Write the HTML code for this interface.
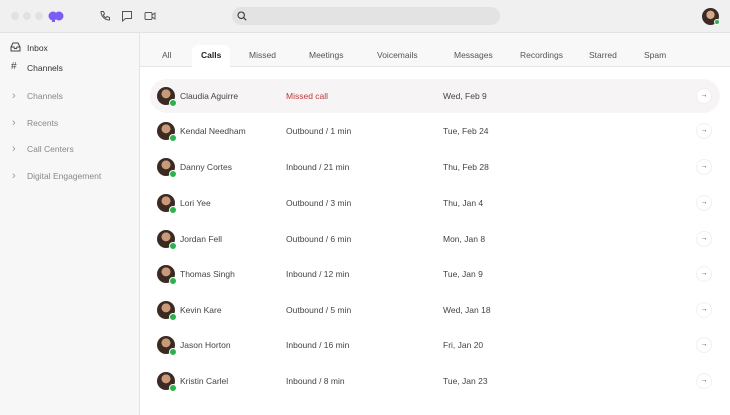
<!DOCTYPE html>
<html><head><style>
*{box-sizing:border-box;margin:0;padding:0}
body{width:730px;height:415px;overflow:hidden;background:#fff;font-family:"Liberation Sans",sans-serif;font-size:8.5px;color:#444;position:relative}
.top{position:absolute;left:0;top:0;width:730px;height:33px;background:#f0f0f0;border-bottom:1px solid #e2e2e2}
.dot{position:absolute;top:12px;width:8px;height:8px;border-radius:50%;background:#e2e2e2}
.side{position:absolute;left:0;top:33px;width:140px;height:382px;background:#f7f7f7;border-right:1px solid #e4e4e4}
.si{position:absolute;left:27px;font-size:8.5px}
.chev{position:absolute;left:12px;color:#999;font-size:11px;line-height:10px}
.tabs{position:absolute;left:140px;top:33px;width:590px;height:34px;background:#f8f8f8;border-bottom:1px solid #e6e6e6}
.tab{position:absolute;top:17px;font-size:8.5px;color:#555}
.calltab{position:absolute;left:192px;top:45px;width:38px;height:22px;background:#fff;border-radius:7px 7px 0 0}
.row{position:absolute;left:150px;width:570px;height:34px}
.row.hl{background:#f6f4f4;border-radius:17px}
.av{position:absolute;left:7px;top:8px;width:18px;height:18px;border-radius:50%;background:radial-gradient(circle at 50% 38%,#c99a7a 0 30%,#3a2a22 32%)}
.av:after{content:"";position:absolute;right:-2px;bottom:-2px;width:6px;height:6px;border-radius:50%;background:#2bb24c;border:1px solid #fff}
.nm{position:absolute;left:30px;top:12px}
.st{position:absolute;left:136px;top:12px}
.dt{position:absolute;left:293px;top:12px}
.ar{position:absolute;left:546px;top:9px;width:16px;height:16px;border-radius:50%;background:#fff;border:1px solid #f0f0f0;font-size:7px;text-align:center;line-height:14px;color:#333}
</style></head><body>
<div class="top">
<div class="dot" style="left:11px"></div><div class="dot" style="left:23px"></div><div class="dot" style="left:35px"></div>
<svg style="position:absolute;left:48px;top:10px" width="16" height="12" viewBox="0 0 16 12"><circle cx="5" cy="6" r="4.5" fill="#7b5cf5"/><circle cx="11" cy="6" r="4.5" fill="#7b5cf5"/><rect x="4" y="7" width="3" height="5" fill="#7b5cf5"/></svg>
<svg style="position:absolute;left:99px;top:10px" width="12" height="12" viewBox="0 0 12 12" fill="none" stroke="#555" stroke-width="1"><path d="M2 1.5l2.5 0 1 2.5-1.3 1a6 6 0 0 0 2.8 2.8l1-1.3 2.5 1v2.5A8.5 8.5 0 0 1 2 1.5z"/></svg>
<svg style="position:absolute;left:121px;top:10px" width="12" height="12" viewBox="0 0 12 12" fill="none" stroke="#555" stroke-width="1"><path d="M1.5 1.5h9v7h-6l-3 2.5z"/></svg>
<svg style="position:absolute;left:144px;top:11px" width="12" height="10" viewBox="0 0 12 10" fill="none" stroke="#555" stroke-width="1"><rect x="1" y="1.5" width="7" height="7" rx="1"/><path d="M8 4l3-2v6l-3-2"/></svg>
<div style="position:absolute;left:232px;top:7px;width:268px;height:18px;border-radius:9px;background:#e3e3e3"></div>
<svg style="position:absolute;left:237px;top:11px" width="10" height="10" viewBox="0 0 10 10" fill="none" stroke="#333" stroke-width="1.1"><circle cx="4.2" cy="4.2" r="3.2"/><path d="M6.6 6.6l2.6 2.6"/></svg>
<div style="position:absolute;left:702px;top:8px;width:17px;height:17px;border-radius:50%;background:radial-gradient(circle at 50% 40%,#d4a88a 0 30%,#3b2b24 32%)"></div>
<div style="position:absolute;left:714px;top:19px;width:6px;height:6px;border-radius:50%;background:#2bb24c;border:1px solid #fff"></div>
</div>
<div class="side">
<svg style="position:absolute;left:10px;top:9px" width="11" height="10" viewBox="0 0 11 10" fill="none" stroke="#444" stroke-width="1"><path d="M1 5l2-4h5l2 4v4H1zM1 5h3l.5 1.5h2L7 5h3"/></svg>
<div class="si" style="top:10px;color:#333">Inbox</div>
<div style="position:absolute;left:11px;top:28px;font-size:10px;color:#444">#</div>
<div class="si" style="top:30px;color:#333">Channels</div>
<div class="chev" style="top:58px">›</div><div class="si" style="top:58px;color:#888">Channels</div>
<div class="chev" style="top:85px">›</div><div class="si" style="top:85px;color:#888">Recents</div>
<div class="chev" style="top:111px">›</div><div class="si" style="top:111px;color:#888">Call Centers</div>
<div class="chev" style="top:138px">›</div><div class="si" style="top:138px;color:#888">Digital Engagement</div>
</div>
<div class="tabs">
<div class="tab" style="left:22px">All</div>
</div>
<div class="calltab"></div>
<div class="tab" style="left:201px;top:50px;font-weight:bold;color:#222">Calls</div>
<div class="tab" style="left:249px;top:50px">Missed</div>
<div class="tab" style="left:309px;top:50px">Meetings</div>
<div class="tab" style="left:377px;top:50px">Voicemails</div>
<div class="tab" style="left:454px;top:50px">Messages</div>
<div class="tab" style="left:520px;top:50px">Recordings</div>
<div class="tab" style="left:589px;top:50px">Starred</div>
<div class="tab" style="left:644px;top:50px">Spam</div>

<div class="row hl" style="top:79px"><div class="av"></div><div class="nm">Claudia Aguirre</div><div class="st" style="color:#c0393b">Missed call</div><div class="dt">Wed, Feb 9</div><div class="ar">→</div></div>
<div class="row" style="top:114px"><div class="av"></div><div class="nm">Kendal Needham</div><div class="st">Outbound / 1 min</div><div class="dt">Tue, Feb 24</div><div class="ar">→</div></div>
<div class="row" style="top:150px"><div class="av"></div><div class="nm">Danny Cortes</div><div class="st">Inbound / 21 min</div><div class="dt">Thu, Feb 28</div><div class="ar">→</div></div>
<div class="row" style="top:186px"><div class="av"></div><div class="nm">Lori Yee</div><div class="st">Outbound / 3 min</div><div class="dt">Thu, Jan 4</div><div class="ar">→</div></div>
<div class="row" style="top:222px"><div class="av"></div><div class="nm">Jordan Fell</div><div class="st">Outbound / 6 min</div><div class="dt">Mon, Jan 8</div><div class="ar">→</div></div>
<div class="row" style="top:257px"><div class="av"></div><div class="nm">Thomas Singh</div><div class="st">Inbound / 12 min</div><div class="dt">Tue, Jan 9</div><div class="ar">→</div></div>
<div class="row" style="top:293px"><div class="av"></div><div class="nm">Kevin Kare</div><div class="st">Outbound / 5 min</div><div class="dt">Wed, Jan 18</div><div class="ar">→</div></div>
<div class="row" style="top:328px"><div class="av"></div><div class="nm">Jason Horton</div><div class="st">Inbound / 16 min</div><div class="dt">Fri, Jan 20</div><div class="ar">→</div></div>
<div class="row" style="top:364px"><div class="av"></div><div class="nm">Kristin Carlel</div><div class="st">Inbound / 8 min</div><div class="dt">Tue, Jan 23</div><div class="ar">→</div></div>
</body></html>
